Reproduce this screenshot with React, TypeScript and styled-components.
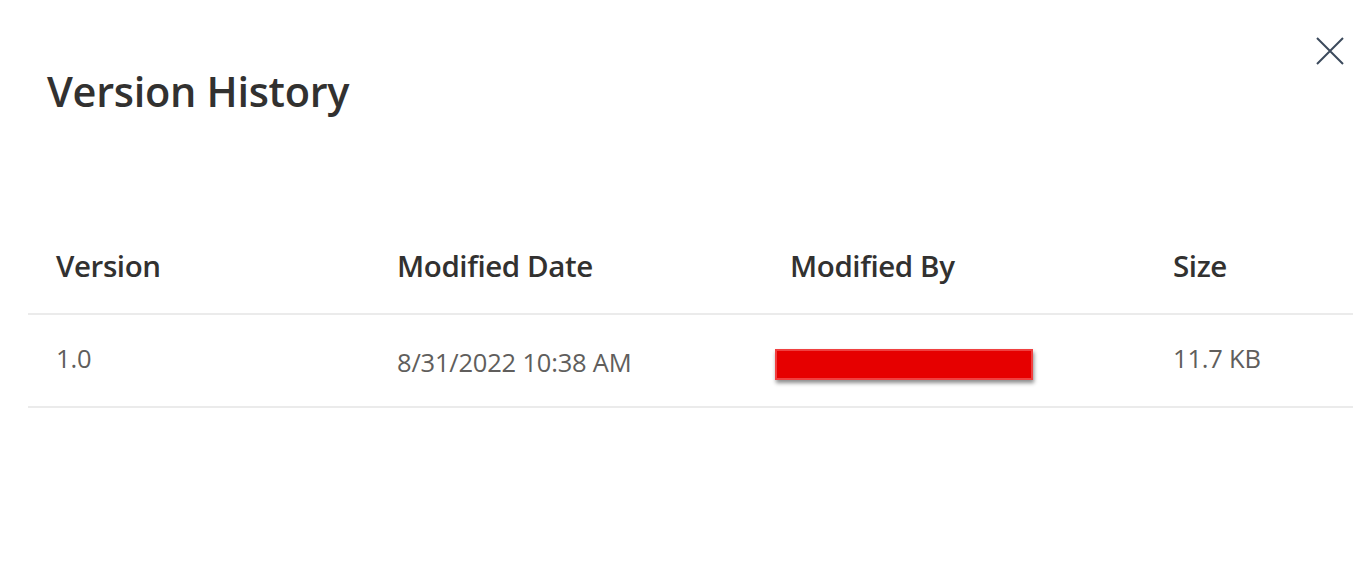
import React from "react"
import styled, { createGlobalStyle } from "styled-components"

const GlobalStyle = createGlobalStyle`
    html, body {
        margin: 0;
        padding: 0;
        background: #ffffff;
        font-family: "Open Sans", "Noto Sans", sans-serif;
    }
`

const Dialog = styled.div`
    width: 1353px;
    height: 564px;
    box-sizing: border-box;
    display: flex;
    flex-direction: column;
    background: #ffffff;
    overflow: hidden;
`

const Header = styled.header`
    display: flex;
    justify-content: space-between;
    align-items: flex-start;
    padding: 0 0 0 47px;
`

const Title = styled.h1`
    margin: 64px 0 0;
    font-size: 41.5px;
    font-weight: 600;
    line-height: 54px;
    color: #323130;
    letter-spacing: -0.3px;
`

const CloseButton = styled.button`
    width: 44px;
    height: 44px;
    margin: 29px 1px 0 0;
    padding: 0;
    border: none;
    background: transparent;
    display: flex;
    align-items: center;
    justify-content: center;
    cursor: pointer;
`

const Table = styled.div`
    margin: 104px 0 0 28px;
    display: flex;
    flex-direction: column;
`

const Row = styled.div`
    display: grid;
    grid-template-columns: 341px 393px 383px 1fr;
    height: 93px;
    align-items: center;
    border-bottom: 2px solid #ebebeb;
    box-sizing: border-box;
`

const Cell = styled.div<{ $head?: boolean; $nudge?: number }>`
    padding-left: 28px;
    font-size: ${(p) => (p.$head ? "29.5px" : "25.5px")};
    font-weight: ${(p) => (p.$head ? 600 : 400)};
    color: ${(p) => (p.$head ? "#323130" : "#605e5c")};
    letter-spacing: ${(p) => (p.$head ? "-0.4px" : "-0.2px")};
    white-space: nowrap;
    position: relative;
    top: ${(p) => p.$nudge ?? 0}px;
`

const Redacted = styled.span`
    display: block;
    width: 258px;
    height: 31px;
    margin-left: -15px;
    box-sizing: border-box;
    background: #e60000;
    border: 2px solid #f04040;
    box-shadow: 1px 3px 4px rgba(0, 0, 0, 0.45);
`

const headers = ["Version", "Modified Date", "Modified By", "Size"]

const App = () => {
    return (
        <Dialog>
            <GlobalStyle />
            <Header>
                <Title>Version History</Title>
                <CloseButton aria-label="Close">
                    <svg width="28" height="28" viewBox="0 0 28 28">
                        <path
                            d="M1 1 L27 27 M27 1 L1 27"
                            stroke="#3c4a5c"
                            strokeWidth="2"
                            fill="none"
                        />
                    </svg>
                </CloseButton>
            </Header>
            <Table>
                <Row>
                    {headers.map((h) => (
                        <Cell key={h} $head $nudge={-2}>
                            {h}
                        </Cell>
                    ))}
                </Row>
                <Row>
                    <Cell $nudge={-3}>1.0</Cell>
                    <Cell $nudge={1}>8/31/2022 10:38 AM</Cell>
                    <Cell $nudge={4}>
                        <Redacted />
                    </Cell>
                    <Cell $nudge={-3}>11.7 KB</Cell>
                </Row>
            </Table>
        </Dialog>
    )
}

export default App
